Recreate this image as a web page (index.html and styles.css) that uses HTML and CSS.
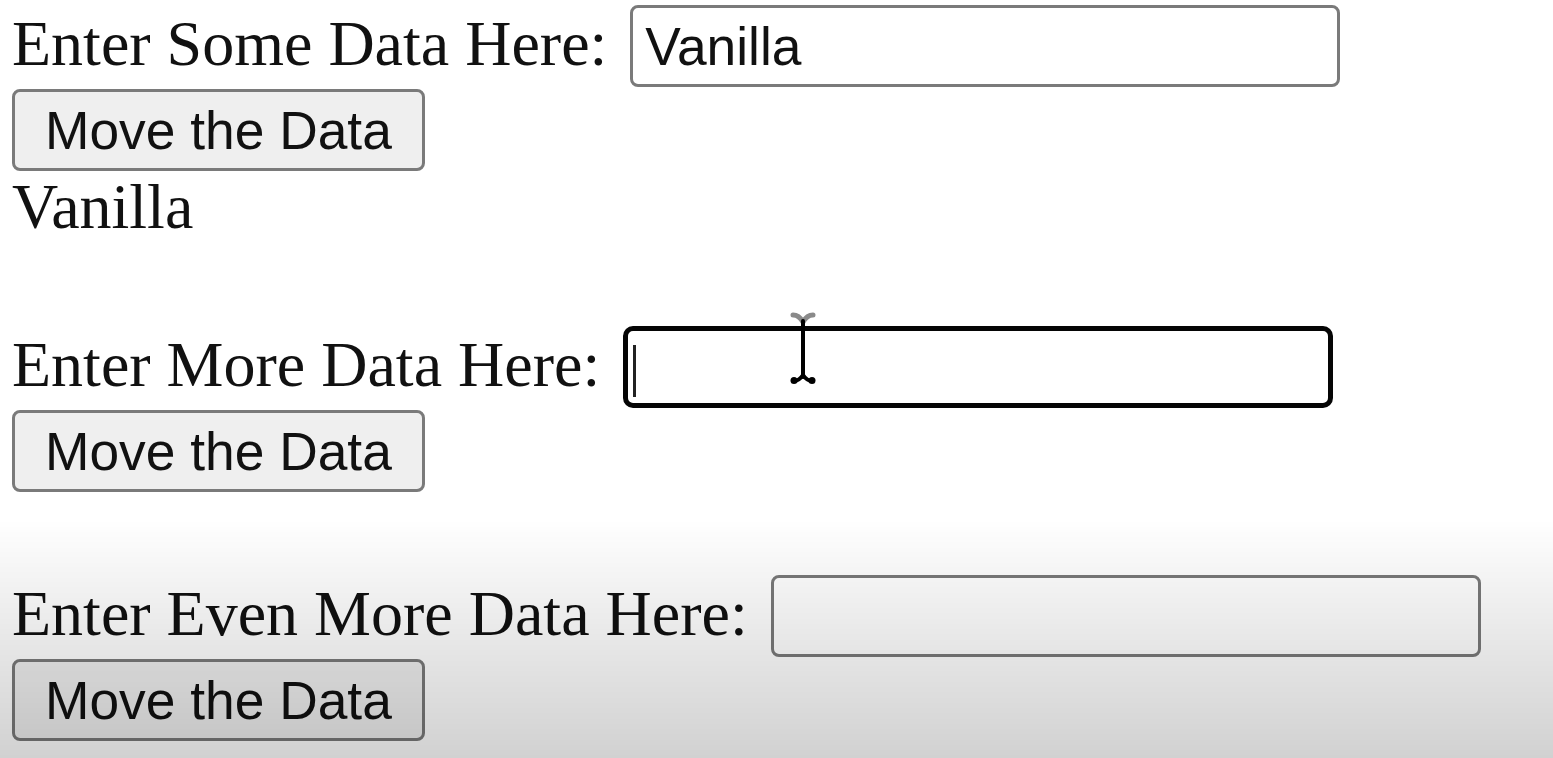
FILE: index.html
```html
<!DOCTYPE html>
<html lang="en">
<head>
<meta charset="utf-8">
<title>Move the Data</title>
<link rel="stylesheet" href="styles.css">
</head>
<body>
<main class="page">
  <section class="group">
    <div class="field">
      <label class="label" for="first">Enter Some Data Here:</label>
      <input id="first" class="text-input" type="text" value="Vanilla">
    </div>
    <button class="btn" type="button">Move the Data</button>
    <div class="output">Vanilla</div>
  </section>

  <section class="group">
    <div class="field">
      <label class="label" for="second">Enter More Data Here:</label>
      <span class="input-wrap">
        <input id="second" class="text-input is-focused" type="text">
        <span class="caret"></span>
        <svg class="cursor" viewBox="0 0 30 74" width="30" height="74" aria-hidden="true">
          <g fill="none" stroke-linecap="round">
            <path d="M5 4 Q11 4 15 11 Q19 4 25 4" stroke="#8a8a8a" stroke-width="5"/>
            <path d="M15 10 V66" stroke="#000" stroke-width="4"/>
            <path d="M6 70 Q11 70 15 64 Q19 70 24 70" stroke="#000" stroke-width="4"/>
          </g>
          <circle cx="6" cy="69.5" r="3.5" fill="#000"/>
          <circle cx="24" cy="69.5" r="3.5" fill="#000"/>
        </svg>
      </span>
    </div>
    <button class="btn" type="button">Move the Data</button>
  </section>

  <section class="group">
    <div class="field">
      <label class="label" for="third">Enter Even More Data Here:</label>
      <input id="third" class="text-input" type="text">
    </div>
    <button class="btn" type="button">Move the Data</button>
  </section>
</main>
</body>
</html>
```
FILE: styles.css
```css
html {
  background: #ffffff;
}

body {
  margin: 0;
  padding: 5px 0 0 12px;
  font-family: "Liberation Serif", "Times New Roman", serif;
  color: #000;
}

body::after {
  content: "";
  position: fixed;
  inset: 0;
  pointer-events: none;
  background: linear-gradient(to bottom,
    rgba(0, 0, 0, 0) 0,
    rgba(0, 0, 0, 0) 520px,
    rgba(0, 0, 0, 0.06) 595px,
    rgba(0, 0, 0, 0.18) 758px);
}

.page {
  display: flex;
  flex-direction: column;
  gap: 83px;
}

.group {
  display: flex;
  flex-direction: column;
  align-items: flex-start;
}

.field {
  display: flex;
  align-items: baseline;
  column-gap: 23px;
  height: 84px;
}

.label {
  font-size: 64px;
  line-height: 1;
  color: #111;
}

.text-input {
  box-sizing: border-box;
  width: 710px;
  height: 82px;
  margin: 0;
  padding: 0 12px;
  border: 3px solid #7a7a7a;
  border-radius: 8px;
  background: #fff;
  font-family: "Liberation Sans", Arial, sans-serif;
  font-size: 53.33px;
  color: #111;
  outline: none;
}

.text-input.is-focused {
  border: 5px solid #050505;
  border-radius: 10px;
}

.input-wrap {
  position: relative;
  display: flex;
}

.caret {
  position: absolute;
  left: 10px;
  top: 19px;
  width: 3px;
  height: 52px;
  background: #222;
}

.cursor {
  position: absolute;
  left: 165px;
  top: -15px;
}

.btn {
  box-sizing: border-box;
  height: 82px;
  margin: 0;
  padding: 0 30px;
  border: 3px solid #7a7a7a;
  border-radius: 8px;
  background: #efefef;
  font-family: "Liberation Sans", Arial, sans-serif;
  font-size: 53.33px;
  color: #111;
}

.output {
  font-size: 64px;
  line-height: 72px;
  color: #111;
}
```
